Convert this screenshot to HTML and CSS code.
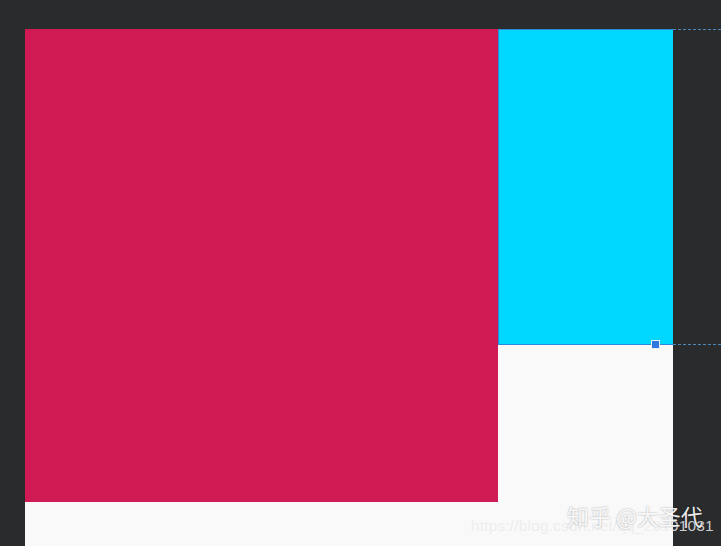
FILE: index.html
```html
<!DOCTYPE html>
<html>
<head>
<meta charset="utf-8">
<link rel="stylesheet" href="styles.css">
</head>
<body>
<div class="stage">
  <div class="panel">
    <div class="red"></div>
    <div class="cyan"></div>
  </div>
  <div class="guide guide-top"></div>
  <div class="guide guide-bottom"></div>
  <div class="handle"></div>
  <div class="wm-url">https://blog.csdn.net/qq_23191031</div>
  <div class="wm-zh">知乎 @大圣代</div>
</div>
</body>
</html>
```
FILE: styles.css
```css
html, body {
  margin: 0;
  padding: 0;
  background: #2a2b2d;
  overflow: hidden;
}
.stage {
  position: relative;
  width: 721px;
  height: 546px;
  padding: 29px 0 0 25px;
  box-sizing: border-box;
}
.panel {
  width: 648px;
  height: 517px;
  background: #f9f9f9;
  display: flex;
  align-items: flex-start;
}
.red {
  width: 473px;
  height: 473px;
  background: #d01a53;
}
.cyan {
  width: 175px;
  height: 316px;
  background: #00d8ff;
  box-sizing: border-box;
  border-top: 1px solid #2a8ad8;
  border-left: 1px solid #2a8ad8;
  border-bottom: 1px solid #2a8ad8;
}
.guide {
  position: absolute;
  left: 673px;
  width: 48px;
  height: 0;
  border-top: 1px dashed #4f86b8;
}
.guide-top { top: 29px; }
.guide-bottom { top: 344px; }
.handle {
  position: absolute;
  left: 651px;
  top: 340px;
  width: 7px;
  height: 7px;
  background: #2f78e0;
  border: 1px solid #e6eef8;
}
.wm-url {
  position: absolute;
  left: 471px;
  top: 517px;
  font-family: "Liberation Sans", Arial, sans-serif;
  font-size: 15.5px;
  color: rgba(235, 235, 235, 0.85);
  letter-spacing: 0.15px;
}
.wm-zh {
  position: absolute;
  left: 567px;
  top: 499px;
  font-family: "Noto Sans CJK SC", sans-serif;
  font-size: 22px;
  color: rgba(255, 255, 255, 0.92);
  text-shadow: 0 0 2px rgba(0,0,0,0.35);
}
```
